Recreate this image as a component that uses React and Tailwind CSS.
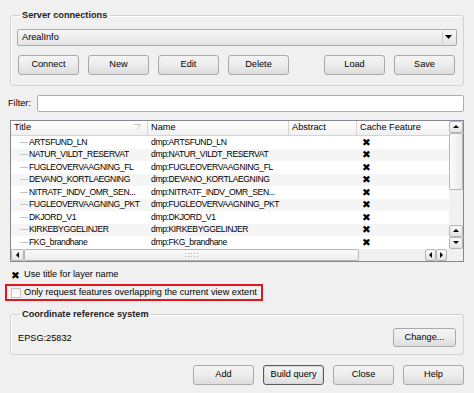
import React from 'react';

const layers = [
  ['ARTSFUND_LN', 'dmp:ARTSFUND_LN'],
  ['NATUR_VILDT_RESERVAT', 'dmp:NATUR_VILDT_RESERVAT'],
  ['FUGLEOVERVAAGNING_FL', 'dmp:FUGLEOVERVAAGNING_FL'],
  ['DEVANO_KORTLAEGNING', 'dmp:DEVANO_KORTLAEGNING'],
  ['NITRATF_INDV_OMR_SEN...', 'dmp:NITRATF_INDV_OMR_SEN...'],
  ['FUGLEOVERVAAGNING_PKT', 'dmp:FUGLEOVERVAAGNING_PKT'],
  ['DKJORD_V1', 'dmp:DKJORD_V1'],
  ['KIRKEBYGGELINJER', 'dmp:KIRKEBYGGELINJER'],
  ['FKG_brandhane', 'dmp:FKG_brandhane'],
];

const Button = ({ children, focused, className = '' }) => (
  <button
    className={`h-[20px] w-[61px] rounded-[3px] border ${
      focused ? 'border-[#5a5a5a] shadow-[inset_0_0_0_1px_#d8d8d8]' : 'border-[#a9a9a9]'
    } bg-gradient-to-b from-[#f4f4f4] via-[#ececec] to-[#dcdcdc] text-center text-[9.2px] text-black ${className}`}
  >
    {children}
  </button>
);

const Arrow = ({ dir }) => {
  const pts = {
    up: '1,5 4,2 7,5',
    down: '1,2 4,5 7,2',
    left: '5,1 2,4 5,7',
    right: '2,1 5,4 2,7',
  };
  return (
    <svg width="8" height="8" viewBox="0 0 8 8">
      <polygon points={pts[dir]} fill="#000" />
    </svg>
  );
};

const ScrollBtn = ({ dir, className = '' }) => (
  <div
    className={`flex items-center justify-center rounded-[2px] border border-[#b5b5b5] bg-gradient-to-b from-[#fafafa] to-[#e3e3e3] ${className}`}
  >
    <Arrow dir={dir} />
  </div>
);

const Cross = () => <span className="font-['DejaVu_Sans',sans-serif] text-[10.5px] leading-none text-black">✖</span>;

export default function App() {
  return (
    <div className="h-[393px] w-[474px] overflow-hidden bg-[#f0f0f0] pt-[8px] font-['Liberation_Sans',Arial,sans-serif] text-[9.2px] leading-none text-black">
      {/* Server connections */}
      <fieldset className="ml-[10px] w-[454px] rounded-[3px] border border-[#d2d2d2] px-[6px] pb-[10px] shadow-[inset_1px_1px_0_#fff]">
        <legend className="ml-[3px] px-[2px] text-[9.2px] font-bold leading-[14px] text-[#222]">Server connections</legend>
        <div className="mt-[7px] flex h-[17px] items-center justify-between rounded-[2px] border border-[#acacac] bg-gradient-to-b from-[#f7f7f7] to-[#e4e4e4] pl-[4px] pr-[3px]">
          <span>ArealInfo</span>
          <div className="flex h-[13px] w-[11px] items-center justify-center border-l border-[#d0d0d0]">
            <svg width="7" height="5" viewBox="0 0 7 5">
              <polygon points="0,0 7,0 3.5,4" fill="#000" />
            </svg>
          </div>
        </div>
        <div className="mt-[9px] ml-[1px] mr-[2px] flex gap-[9px]">
          <Button>Connect</Button>
          <Button>New</Button>
          <Button>Edit</Button>
          <Button>Delete</Button>
          <div className="flex-1" />
          <Button>Load</Button>
          <Button>Save</Button>
        </div>
      </fieldset>

      {/* Filter */}
      <div className="mt-[9px] flex items-center justify-between pl-[8px] pr-[10px]">
        <span>Filter:</span>
        <div className="h-[17px] w-[427px] rounded-[2px] border border-[#abadb3] bg-white" />
      </div>

      {/* Layer table */}
      <div className="mx-[10px] mt-[8px] flex h-[142px] border border-[#828790] bg-white">
        <div className="flex w-[438px] flex-col">
          <div className="flex h-[15px] border-b border-[#d5d5d5] bg-gradient-to-b from-white to-[#f0f0f0]">
            <div className="relative flex w-[137px] items-center border-r border-[#d5d5d5] pl-[3px]">
              Title
              <svg className="absolute right-[6px] top-[3px]" width="8" height="6" viewBox="0 0 8 6">
                <polyline points="0.5,0.5 7.5,0.5 4,5.5" fill="none" stroke="#c8c8c8" strokeWidth="1" />
              </svg>
            </div>
            <div className="flex w-[141px] items-center border-r border-[#d5d5d5] pl-[3px]">Name</div>
            <div className="flex w-[68px] items-center border-r border-[#d5d5d5] pl-[3px]">Abstract</div>
            <div className="flex flex-1 items-center pl-[3px]">Cache Feature</div>
          </div>
          {layers.map(([title, name], i) => (
            <div
              key={name}
              className={`flex h-[12.5px] items-center text-[8.6px] tracking-[-0.4px] ${i % 2 ? 'bg-[#f5f5f5]' : 'bg-white'}`}
            >
              <div className="flex w-[137px] shrink-0 items-center">
                <div className="ml-[9px] w-[8px] shrink-0 border-t border-[#c4c4c4]" />
                <span className="ml-[1px] whitespace-nowrap">{title}</span>
              </div>
              <div className="w-[141px] shrink-0 whitespace-nowrap pl-[3px]">{name}</div>
              <div className="w-[68px] shrink-0" />
              <div className="flex-1 pl-[5px]">
                <Cross />
              </div>
            </div>
          ))}
          <div className="flex h-[12.5px] items-center bg-[#f0f0f0] pr-[2px]">
            <ScrollBtn dir="left" className="h-[12px] w-[13px]" />
            <div className="flex h-[12px] w-[335px] items-center justify-center rounded-[2px] border border-[#b5b5b5] bg-gradient-to-b from-[#fbfbfb] to-[#ececec]">
              <div className="h-[6px] w-[16px] bg-[radial-gradient(#b0b0b0_0.6px,transparent_0.8px)] bg-[length:3px_3px]" />
            </div>
            <div className="flex-1" />
            <ScrollBtn dir="left" className="h-[12px] w-[11px]" />
            <ScrollBtn dir="right" className="h-[12px] w-[11px]" />
          </div>
        </div>
        <div className="flex flex-1 flex-col bg-[#f0f0f0]">
          <ScrollBtn dir="up" className="h-[12px]" />
          <div className="h-[57px] rounded-[2px] border border-[#b5b5b5] bg-gradient-to-r from-[#fbfbfb] to-[#ececec]" />
          <div className="flex-1" />
          <ScrollBtn dir="up" className="h-[12px]" />
          <ScrollBtn dir="down" className="h-[12px]" />
          <div className="h-[12.5px]" />
        </div>
      </div>

      {/* Options */}
      <div className="mt-[7px] flex h-[12px] items-center pl-[11px]">
        <div className="flex h-[9px] w-[9px] items-center justify-center">
          <Cross />
        </div>
        <span className="ml-[4px]">Use title for layer name</span>
      </div>
      <div className="ml-[5px] mt-[3px] flex h-[17px] w-[258px] items-center border-2 border-[#e3151d] pl-[4px]">
        <div className="h-[10px] w-[10px] border border-[#c4c4c4] bg-gradient-to-b from-[#f0f0f0] to-white" />
        <span className="ml-[3px] whitespace-nowrap">Only request features overlapping the current view extent</span>
      </div>

      {/* Coordinate reference system */}
      <fieldset className="ml-[10px] mt-[6px] w-[454px] rounded-[3px] border border-[#d2d2d2] px-[6px] pb-[7px] shadow-[inset_1px_1px_0_#fff]">
        <legend className="ml-[3px] px-[2px] text-[9.2px] font-bold leading-[14px] text-[#222]">Coordinate reference system</legend>
        <div className="mt-[7px] flex h-[19px] items-center justify-between pl-[1px] pr-[1px]">
          <span className="mt-[2px]">EPSG:25832</span>
          <Button className="!h-[19px] !w-[63px]">Change...</Button>
        </div>
      </fieldset>

      {/* Dialog buttons */}
      <div className="mt-[10px] flex justify-end gap-[9px] pr-[10px]">
        <Button>Add</Button>
        <Button focused>Build query</Button>
        <Button>Close</Button>
        <Button>Help</Button>
      </div>
    </div>
  );
}
